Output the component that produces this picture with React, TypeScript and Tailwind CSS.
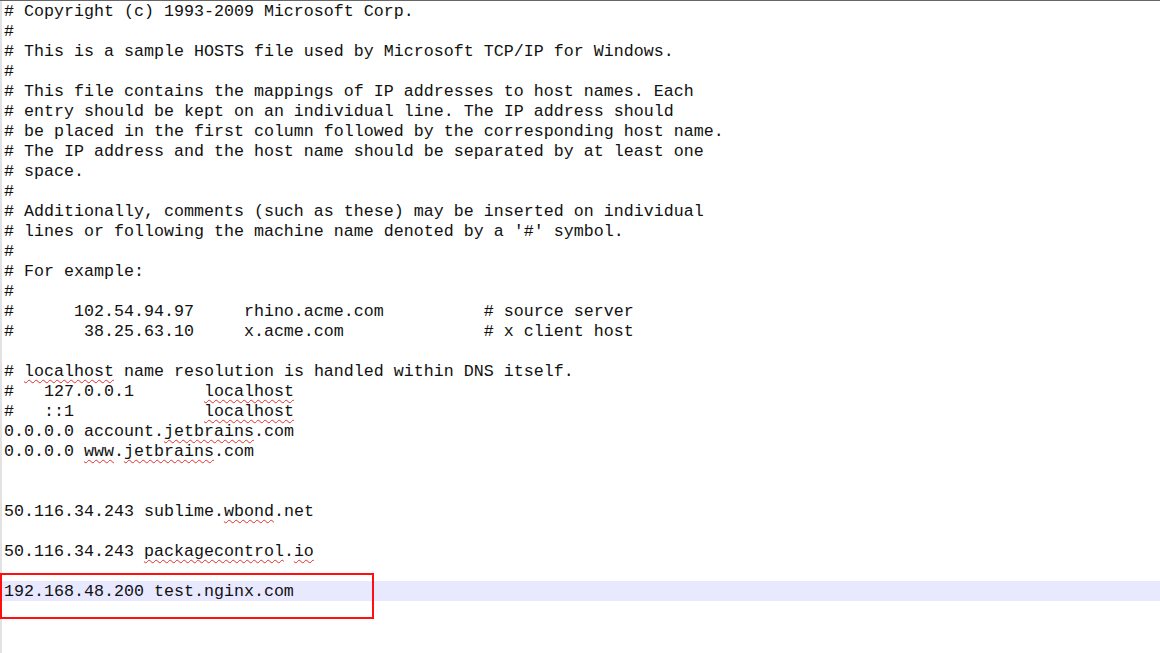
import React from 'react';

type Seg = string | { sq: string };

const lines: Seg[][] = [
  ['# Copyright (c) 1993-2009 Microsoft Corp.'],
  ['#'],
  ['# This is a sample HOSTS file used by Microsoft TCP/IP for Windows.'],
  ['#'],
  ['# This file contains the mappings of IP addresses to host names. Each'],
  ['# entry should be kept on an individual line. The IP address should'],
  ['# be placed in the first column followed by the corresponding host name.'],
  ['# The IP address and the host name should be separated by at least one'],
  ['# space.'],
  ['#'],
  ['# Additionally, comments (such as these) may be inserted on individual'],
  ["# lines or following the machine name denoted by a '#' symbol."],
  ['#'],
  ['# For example:'],
  ['#'],
  ['#      102.54.94.97     rhino.acme.com          # source server'],
  ['#       38.25.63.10     x.acme.com              # x client host'],
  [''],
  ['# ', { sq: 'localhost' }, ' name resolution is handled within DNS itself.'],
  ['#   127.0.0.1       ', { sq: 'localhost' }],
  ['#   ::1             ', { sq: 'localhost' }],
  ['0.0.0.0 account.', { sq: 'jetbrains' }, '.com'],
  ['0.0.0.0 ', { sq: 'www' }, '.', { sq: 'jetbrains' }, '.com'],
  [''],
  [''],
  ['50.116.34.243 sublime.', { sq: 'wbond' }, '.net'],
  [''],
  ['50.116.34.243 ', { sq: 'packagecontrol' }, '.', { sq: 'io' }],
  [''],
  ['192.168.48.200 test.nginx.com'],
  [''],
  [''],
  [''],
];

const CURRENT = 29;

export default function App() {
  return (
    <div className="relative h-[653px] w-[1160px] overflow-hidden bg-white border-t border-[#666666]">
      <div className="flex h-full">
        <div className="w-[2px] shrink-0 bg-[#e2e2e2]" />
        <div className="flex-1 font-['Liberation_Mono',monospace] text-[16.67px] leading-[20px] text-[#111111]">
          {lines.map((segs, i) => (
            <div
              key={i}
              className={
                i === CURRENT
                  ? 'h-[20px] whitespace-pre pl-[2px] pt-[1px] bg-[#e8e8ff]'
                  : 'h-[20px] whitespace-pre pl-[2px] pt-[1px]'
              }
            >
              {segs.map((s, j) =>
                typeof s === 'string' ? (
                  <span key={j}>{s}</span>
                ) : (
                  <span
                    key={j}
                    className="underline decoration-wavy decoration-[#e03030] decoration-1 underline-offset-[3px]"
                  >
                    {s.sq}
                  </span>
                )
              )}
            </div>
          ))}
        </div>
      </div>
      {/* annotation box over the new entry */}
      <div className="absolute left-0 top-[572px] h-[46px] w-[374px] border-2 border-[#ff1010]" />
    </div>
  );
}
